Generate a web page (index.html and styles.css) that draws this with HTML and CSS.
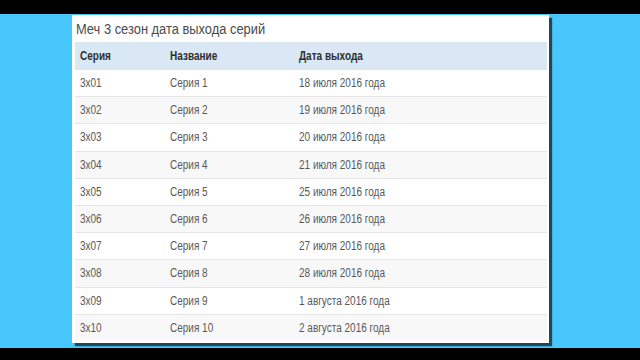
FILE: index.html
```html
<!DOCTYPE html>
<html lang="ru">
<head>
<meta charset="utf-8">
<link rel="stylesheet" href="styles.css">
</head>
<body>
<div class="stage">
  <div class="panel">
    <div class="title"><span>Меч 3 сезон дата выхода серий</span></div>
    <div class="table">
      <div class="row head"><span>Серия</span><span>Название</span><span>Дата выхода</span></div>
      <div class="row"><span>3x01</span><span>Серия 1</span><span>18 июля 2016 года</span></div>
      <div class="row"><span>3x02</span><span>Серия 2</span><span>19 июля 2016 года</span></div>
      <div class="row"><span>3x03</span><span>Серия 3</span><span>20 июля 2016 года</span></div>
      <div class="row"><span>3x04</span><span>Серия 4</span><span>21 июля 2016 года</span></div>
      <div class="row"><span>3x05</span><span>Серия 5</span><span>25 июля 2016 года</span></div>
      <div class="row"><span>3x06</span><span>Серия 6</span><span>26 июля 2016 года</span></div>
      <div class="row"><span>3x07</span><span>Серия 7</span><span>27 июля 2016 года</span></div>
      <div class="row"><span>3x08</span><span>Серия 8</span><span>28 июля 2016 года</span></div>
      <div class="row"><span>3x09</span><span>Серия 9</span><span>1 августа 2016 года</span></div>
      <div class="row"><span>3x10</span><span>Серия 10</span><span>2 августа 2016 года</span></div>
    </div>
  </div>
</div>
</body>
</html>
```

FILE: styles.css
```css
html, body {
  margin: 0;
  padding: 0;
  background: #000;
  width: 640px;
  height: 360px;
  overflow: hidden;
  font-family: "Liberation Sans", Arial, sans-serif;
}
.stage {
  margin-top: 14px;
  height: 334px;
  background: #47c7fb;
  padding: 1px 0 0 72px;
  box-sizing: border-box;
}
.panel {
  width: 477px;
  height: 328px;
  background: #fff;
  box-shadow: 3px 3px 1px #1b4a5f;
  padding: 0 2px 0 3px;
  box-sizing: border-box;
}
.title {
  height: 27px;
  line-height: 28px;
  font-size: 14px;
  color: #4a4a4a;
  padding-left: 1px;
}
.title span {
  display: inline-block;
  transform: scaleX(0.92);
  transform-origin: left center;
  white-space: nowrap;
}
.row {
  display: grid;
  grid-template-columns: 90px 129px 1fr;
  height: 27.2px;
  align-items: center;
  font-size: 12.5px;
  color: #585858;
  border-top: 1px solid #e6e6e6;
  box-sizing: border-box;
}
.row span {
  padding-left: 6.25px;
  display: inline-block;
  transform: scaleX(0.8);
  transform-origin: left center;
  white-space: nowrap;
}
.row:nth-child(odd) { background: #f8f8f8; }
.row.head {
  background: #d9e8f4;
  border-top: none;
  height: 27px;
  font-weight: bold;
  color: #2e2e2e;
}
```
